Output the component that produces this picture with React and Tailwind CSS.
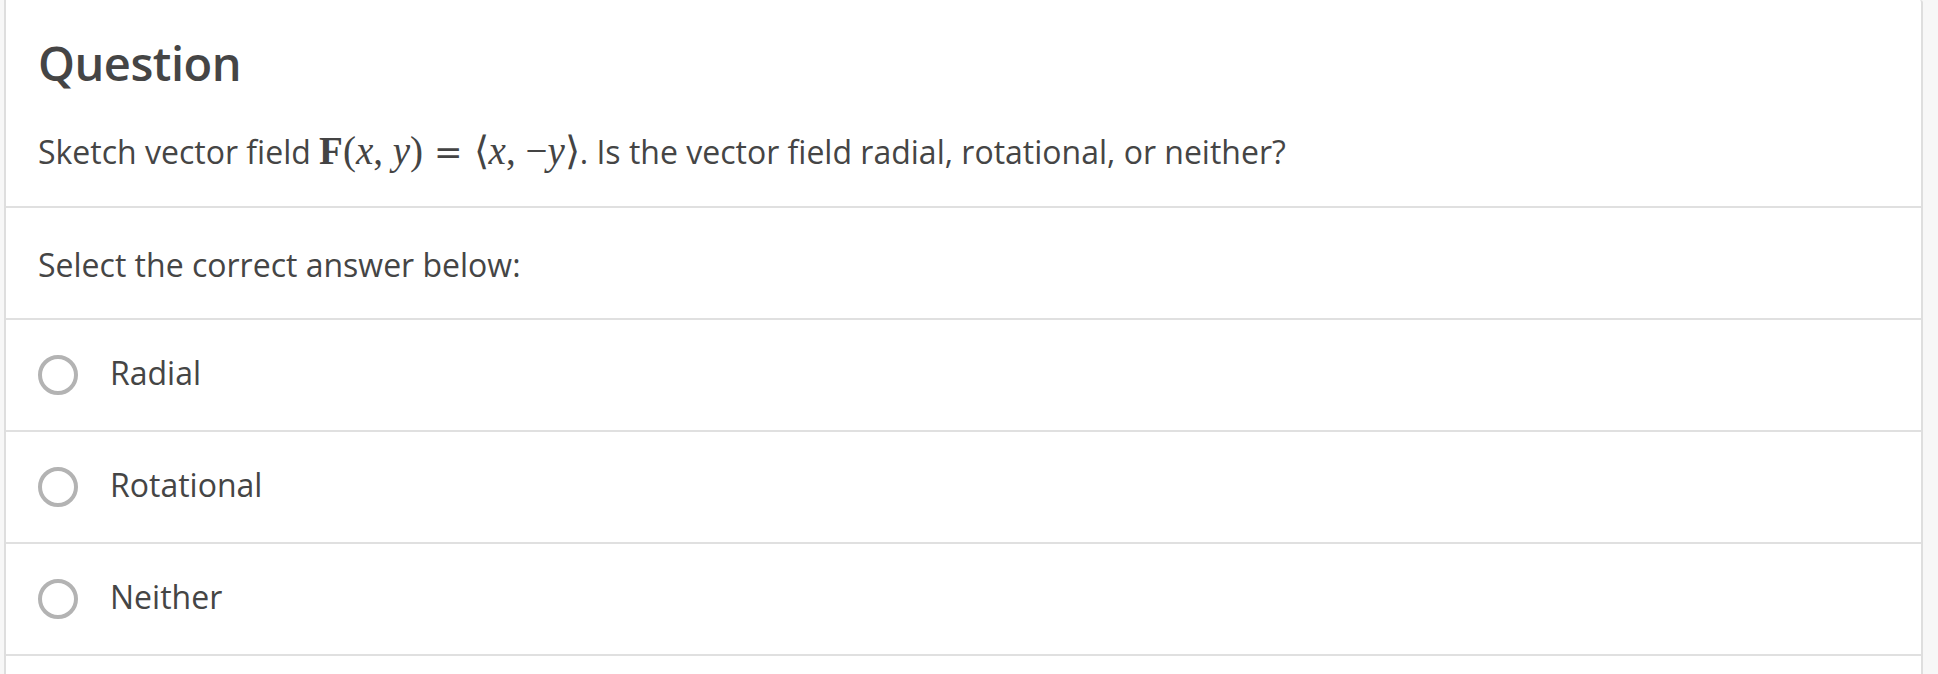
import React from "react";

const options = ["Radial", "Rotational", "Neither"];

const MathExpr = () => (
  <span className="font-['Liberation_Serif',serif] text-[39px] text-[#444]">
    <span className="font-bold">F</span>
    <span>(</span>
    <span className="italic">x</span>
    <span>, </span>
    <span className="italic">y</span>
    <span>)</span>
    <span className="mx-[11px] font-['DejaVu_Serif',serif] text-[34px]">=</span>
    <span>⟨</span>
    <span className="italic">x</span>
    <span>, −</span>
    <span className="italic">y</span>
    <span>⟩</span>
  </span>
);

const App = () => {
  return (
    <div className="min-h-[674px] w-full bg-[#f7f7f7] font-['Open_Sans',sans-serif] text-[#454545]">
      <div className="ml-[4px] w-[1919px] bg-white border-x-2 border-[#dedede] rounded-tr-[3px]">
        <div className="px-[32px] pt-[35px] pb-[32px] border-b-2 border-[#e0e0e0]">
          <h1 className="text-[47px] leading-[56px] font-semibold tracking-[-0.5px]">Question</h1>
          <p className="mt-[38px] text-[32px] leading-[44px]">
            Sketch vector field <MathExpr />. Is the vector field radial, rotational, or neither?
          </p>
        </div>
        <div className="h-[112px] flex items-center px-[32px] border-b-2 border-[#e0e0e0]">
          <p className="text-[32px] leading-[44px] pt-[4px]">Select the correct answer below:</p>
        </div>
        {options.map((opt) => (
          <label
            key={opt}
            className="h-[112px] flex items-center px-[32px] border-b-2 border-[#e0e0e0] cursor-pointer"
          >
            <span className="w-[40px] h-[40px] rounded-full border-[4px] border-[#b3b3b3] shrink-0" />
            <span className="ml-[32px] text-[32px] leading-[44px] pb-[4px]">{opt}</span>
          </label>
        ))}
        <div className="h-[30px]" />
      </div>
    </div>
  );
};

export default App;
